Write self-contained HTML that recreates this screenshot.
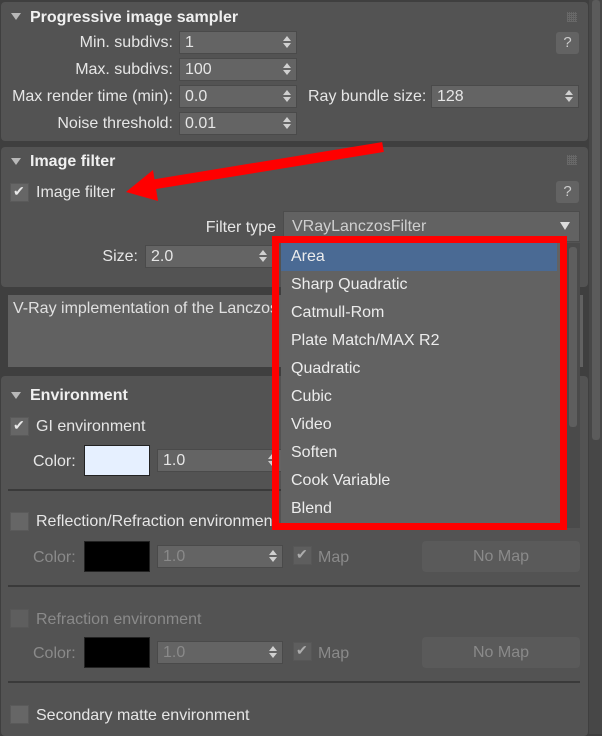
<!DOCTYPE html>
<html><head><style>
*{box-sizing:border-box;margin:0;padding:0}
body{width:602px;height:734px;background:#3f3f3f;position:relative;overflow:hidden;font-family:"Liberation Sans",sans-serif;font-size:16px;color:#e6e6e6}
.a{position:absolute;white-space:nowrap}
.panel{position:absolute;left:1px;width:587px;background:#535353;border-radius:4px}
.h{position:absolute;font-weight:bold;font-size:16px;color:#f0f0f0}
.tri{position:absolute;width:0;height:0;border-left:5px solid transparent;border-right:5px solid transparent;border-top:7px solid #b8b8b8}
.lbl{position:absolute;text-align:right;white-space:nowrap}
.sp{position:absolute;height:23px;background:#646464;border:1px solid #4a4a4a;padding:2px 5px;color:#e6e6e6}
.sp:after{content:"";position:absolute;right:5px;top:4px;width:0;height:0;border-left:4px solid transparent;border-right:4px solid transparent;border-bottom:5px solid #d0d0d0}
.sp:before{content:"";position:absolute;right:5px;top:11px;width:0;height:0;border-left:4px solid transparent;border-right:4px solid transparent;border-top:5px solid #d0d0d0}
.q{position:absolute;width:23px;height:22px;background:#636363;border-radius:3px;color:#ccc;text-align:center;line-height:22px;font-size:15px}
.cb{position:absolute;width:19px;height:19px;background:#666;border:1px solid #5a5a5a}
.cb.k:after{content:"✔";position:absolute;left:2px;top:-1px;font-size:14px;color:#e8e8e8}
.dim{color:#8a8a8a}
.sep{position:absolute;left:8px;width:572px;height:2px;background:#3a3a3a}
.sw{position:absolute;width:66px;height:31px;border:1px solid #222}
.btn{position:absolute;width:158px;height:31px;background:#5a5a5a;border-radius:4px;color:#8a8a8a;text-align:center;line-height:31px;font-size:16px}
.it{position:absolute;left:0;width:276px;height:28px;line-height:28px;padding-left:10px;font-size:16px;color:#ececec}
.grip{position:absolute;width:10px;height:10px;background:repeating-linear-gradient(90deg,#777 0 1px,transparent 1px 2px),repeating-linear-gradient(0deg,#777 0 1px,transparent 1px 2px);opacity:.6}
</style></head><body>
<div class="a" style="left:589px;top:0;width:13px;height:734px;background:#474747"></div>
<div class="a" style="left:592px;top:0;width:8px;height:440px;background:#5b5b5b;border-radius:3px"></div>

<div class="panel" style="top:2px;height:139px">
  <div class="tri" style="left:10px;top:11px"></div>
  <div class="h" style="left:29px;top:7px">Progressive image sampler</div>
  <div class="grip" style="left:566px;top:10px"></div>
</div>
<div class="lbl" style="right:429px;top:34px">Min. subdivs:</div>
<div class="sp" style="left:179px;top:31px;width:118px">1</div>
<div class="q" style="left:556px;top:32px">?</div>
<div class="lbl" style="right:429px;top:61px">Max. subdivs:</div>
<div class="sp" style="left:179px;top:58px;width:118px">100</div>
<div class="lbl" style="right:429px;top:88px">Max render time (min):</div>
<div class="sp" style="left:179px;top:85px;width:118px">0.0</div>
<div class="lbl" style="left:308px;top:88px">Ray bundle size:</div>
<div class="sp" style="left:431px;top:85px;width:148px">128</div>
<div class="lbl" style="right:429px;top:115px">Noise threshold:</div>
<div class="sp" style="left:179px;top:112px;width:118px">0.01</div>

<div class="panel" style="top:147px;height:140px">
  <div class="tri" style="left:10px;top:11px"></div>
  <div class="h" style="left:29px;top:6px">Image filter</div>
  <div class="grip" style="left:566px;top:8px"></div>
</div>
<div class="cb k" style="left:10px;top:183px"></div>
<div class="a" style="left:36px;top:184px">Image filter</div>
<div class="q" style="left:556px;top:181px">?</div>
<div class="lbl" style="right:326px;top:219px">Filter type</div>
<div class="a" style="left:283px;top:211px;width:297px;height:31px;background:#626262;border:1px solid #4c4c4c;padding:6px 8px;color:#cfcfcf">VRayLanczosFilter</div>
<div class="a" style="left:560px;top:222px;width:0;height:0;border-left:5px solid transparent;border-right:5px solid transparent;border-top:8px solid #ddd"></div>
<div class="lbl" style="right:464px;top:248px">Size:</div>
<div class="sp" style="left:145px;top:245px;width:128px">2.0</div>
<div class="a" style="left:8px;top:295px;width:575px;height:72px;background:#616161;padding:5px 5px;color:#e0e0e0">V-Ray implementation of the Lanczos filter</div>

<div class="panel" style="top:376px;height:360px">
  <div class="tri" style="left:10px;top:16px"></div>
  <div class="h" style="left:29px;top:11px">Environment</div>
</div>
<div class="cb k" style="left:10px;top:417px"></div>
<div class="a" style="left:36px;top:418px">GI environment</div>
<div class="a" style="left:33px;top:453px">Color:</div>
<div class="sw" style="left:84px;top:445px;background:#e6f0ff"></div>
<div class="sp" style="left:157px;top:449px;width:125px">1.0</div>
<div class="sep" style="top:489px"></div>
<div class="cb" style="left:10px;top:512px"></div>
<div class="a" style="left:36px;top:513px">Reflection/Refraction environment</div>
<div class="a dim" style="left:33px;top:549px">Color:</div>
<div class="sw" style="left:84px;top:541px;background:#000"></div>
<div class="sp dim" style="left:157px;top:545px;width:126px">1.0</div>
<div class="cb k" style="left:293px;top:546px;opacity:.6"></div>
<div class="a dim" style="left:318px;top:549px">Map</div>
<div class="btn" style="left:422px;top:541px">No Map</div>
<div class="sep" style="top:585px"></div>
<div class="cb" style="left:10px;top:609px;opacity:.6"></div>
<div class="a dim" style="left:36px;top:611px">Refraction environment</div>
<div class="a dim" style="left:33px;top:645px">Color:</div>
<div class="sw" style="left:84px;top:637px;background:#000"></div>
<div class="sp dim" style="left:157px;top:641px;width:126px">1.0</div>
<div class="cb k" style="left:293px;top:642px;opacity:.6"></div>
<div class="a dim" style="left:318px;top:645px">Map</div>
<div class="btn" style="left:422px;top:637px">No Map</div>
<div class="sep" style="top:681px"></div>
<div class="cb" style="left:10px;top:705px"></div>
<div class="a" style="left:36px;top:707px">Secondary matte environment</div>

<div class="a" style="left:566px;top:243px;width:14px;height:285px;background:#4a4a4a"></div>
<div class="a" style="left:569px;top:247px;width:8px;height:180px;background:#5e5e5e;border-radius:3px"></div>
<div class="a" style="left:281px;top:242px;width:280px;height:282px;background:#626262">
  <div class="it" style="top:1px;background:#4a6a94">Area</div>
  <div class="it" style="top:29px">Sharp Quadratic</div>
  <div class="it" style="top:57px">Catmull-Rom</div>
  <div class="it" style="top:85px">Plate Match/MAX R2</div>
  <div class="it" style="top:113px">Quadratic</div>
  <div class="it" style="top:141px">Cubic</div>
  <div class="it" style="top:169px">Video</div>
  <div class="it" style="top:197px">Soften</div>
  <div class="it" style="top:225px">Cook Variable</div>
  <div class="it" style="top:253px">Blend</div>
</div>
<div class="a" style="left:272px;top:236px;width:295px;height:294px;border:7px solid #ff0000"></div>

<svg class="a" style="left:0;top:0" width="602" height="734">
  <line x1="383" y1="147" x2="150" y2="185" stroke="#ff0000" stroke-width="10"/>
  <polygon points="126,192 153,170 158,201" fill="#ff0000"/>
</svg>
</body></html>
